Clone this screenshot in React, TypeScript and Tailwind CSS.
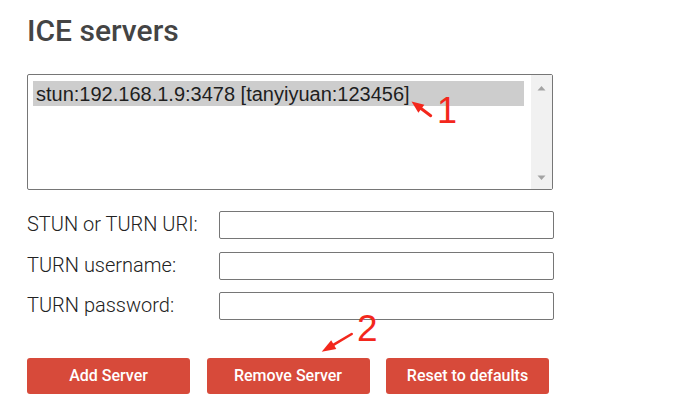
import React from 'react';

// ICE servers settings panel with annotation marks
const FIELDS = ['STUN or TURN URI:', 'TURN username:', 'TURN password:'];
const BUTTONS = ['Add Server', 'Remove Server', 'Reset to defaults'];

function ScrollArrow({ down }: { down?: boolean }) {
  return (
    <svg width="9" height="6" viewBox="0 0 9 6" className="block">
      <polygon points={down ? '0.5,0.5 8.5,0.5 4.5,5' : '0.5,5.5 8.5,5.5 4.5,1'} fill="#a3a3a3" />
    </svg>
  );
}

function Annotations() {
  return (
    <svg className="absolute inset-0 pointer-events-none" width="690" height="417" viewBox="0 0 690 417">
      {/* arrow 1 */}
      <line x1="421.4" y1="108.8" x2="430.7" y2="115.7" stroke="#f3271c" strokeWidth="3" strokeLinecap="round" />
      <polygon points="411.5,101.5 418.4,112.8 424.4,104.8" fill="#f3271c" />
      <text x="437" y="122.7" fontSize="36" fill="#f3271c" fontFamily="'Liberation Sans', Arial, sans-serif">1</text>
      {/* arrow 2 */}
      <line x1="333.8" y1="344.6" x2="351.7" y2="334" stroke="#f3271c" strokeWidth="2.6" strokeLinecap="round" />
      <polygon points="321.7,351.7 336.3,348.9 331.2,340.3" fill="#f3271c" />
      <text x="357" y="340.5" fontSize="37" fill="#f3271c" fontFamily="'Liberation Sans', Arial, sans-serif">2</text>
    </svg>
  );
}

export default function App() {
  return (
    <div className="relative w-[690px] h-[417px] bg-white overflow-hidden font-['Roboto',sans-serif]">
      <div className="pl-[27px] pt-[16px]">
        <h2 className="text-[30px] leading-[30px] font-medium text-[#444]">ICE servers</h2>

        {/* server list */}
        <div className="mt-[28px] w-[526px] h-[116px] flex border border-[#767676] rounded-[2px]">
          <div className="flex-1 pt-[6px] pl-[5px] pr-[7px]">
            <div className="h-[25px] bg-[#cdcdcd] pl-[3px] pt-[2px] text-[20px] leading-[23px] text-[#1e1e1e] font-['Liberation_Sans',Arial,sans-serif] whitespace-nowrap">
              stun:192.168.1.9:3478 [tanyiyuan:123456]
            </div>
          </div>
          <div className="w-[21px] bg-[#f1f1f1] flex flex-col items-center justify-between pt-[10px] pb-[8px]">
            <ScrollArrow />
            <ScrollArrow down />
          </div>
        </div>

        {/* form */}
        <div className="mt-[21px] flex flex-col gap-[12.5px]">
          {FIELDS.map((label) => (
            <div key={label} className="flex items-start">
              <label className="w-[192px] text-[20px] leading-[26px] font-light text-[#222]">{label}</label>
              <input className="w-[335px] h-[28px] border border-[#767676] rounded-[2px] bg-white outline-none" />
            </div>
          ))}
        </div>

        {/* actions */}
        <div className="mt-[38px] flex gap-[16.5px]">
          {BUTTONS.map((b) => (
            <button
              key={b}
              className="w-[163px] h-[36px] rounded-[3px] bg-[#d74a3a] text-white text-[16px] font-medium"
            >
              {b}
            </button>
          ))}
        </div>
      </div>
      <Annotations />
    </div>
  );
}
